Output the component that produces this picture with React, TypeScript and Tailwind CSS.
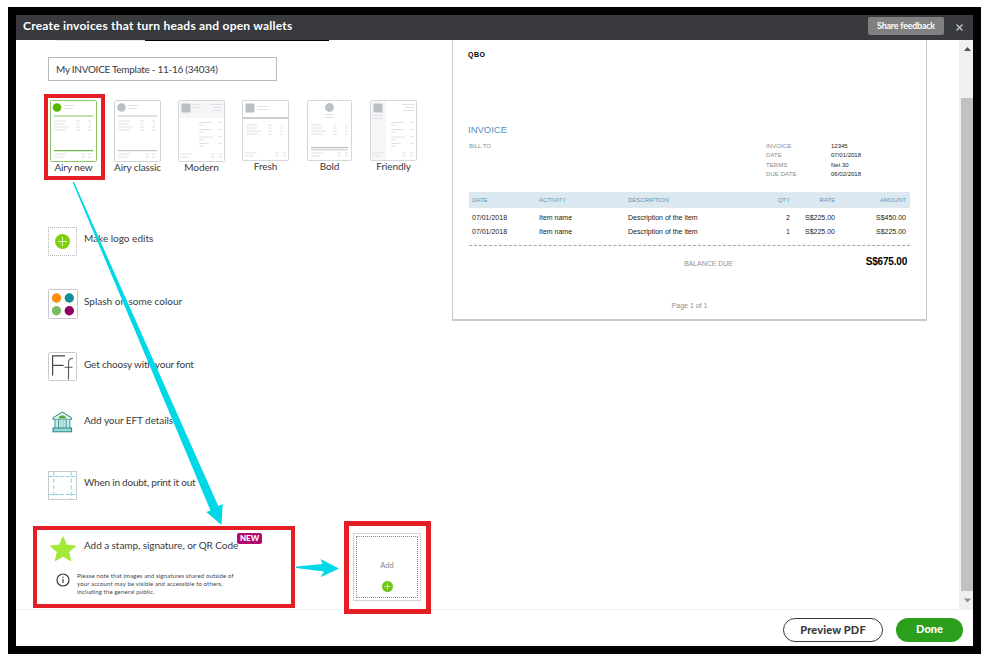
import React from 'react';

const PlusCircle: React.FC<{ className: string; color: string }> = ({ className, color }) => (
  <svg viewBox="0 0 16 16" className={className}>
    <circle cx="8" cy="8" r="8" fill={color} />
    <path d="M8 3.2v9.6M3.2 8h9.6" stroke="#e4f8c4" strokeWidth="1" fill="none" />
  </svg>
);

type Line = [x: number, y: number, w: number];

const tableLines: Line[] = [
  [4, 20.5, 12], [4, 23.5, 11], [4, 26.5, 15], [4, 29.5, 12],
  [26, 20.5, 4], [26, 23.5, 3], [26, 26.5, 4], [26, 29.5, 4],
  [38, 20.5, 3], [39, 23.5, 2], [38, 26.5, 3], [38, 29.5, 3],
];

const footerLines: Line[] = [
  [4, 53.5, 12], [4, 56.5, 9], [31, 53.5, 4], [31, 56.5, 4], [38, 53.5, 3], [38, 56.5, 3],
];

const sideLines: Line[] = [
  [21, 22, 13], [21, 24.5, 4], [41, 22, 3], [21, 29, 13], [21, 31.5, 5], [40, 29, 4],
  [21, 36.5, 14], [21, 39, 5], [40, 36.5, 4], [21, 43, 10], [21, 45.5, 4], [41, 43, 3],
];

const Lines: React.FC<{ lines: Line[]; color?: string }> = ({ lines, color = '#dfe1e4' }) => (
  <>
    {lines.map(([x, y, w]) => (
      <rect key={`${x}-${y}`} x={x} y={y} width={w} height="1" fill={color} />
    ))}
  </>
);

interface Template {
  name: string;
  art: React.ReactNode;
  width: number;
  height: number;
  border: string;
}

const templates: Template[] = [
  {
    name: 'Airy new',
    width: 47,
    height: 62,
    border: '#8cc665',
    art: (
      <>
        <circle cx="7" cy="7.5" r="4.3" fill="#53b700" />
        <Lines lines={[[14, 5, 10], [14, 8, 9]]} />
        <rect x="4" y="15.3" width="39" height="1.4" fill="#a5d68b" />
        <Lines lines={tableLines} />
        <rect x="4" y="50" width="39" height="1.2" fill="#6bb344" />
        <Lines lines={footerLines} />
      </>
    ),
  },
  {
    name: 'Airy classic',
    width: 47,
    height: 62,
    border: '#cfd1d5',
    art: (
      <>
        <circle cx="7.5" cy="7.5" r="4.3" fill="#babec5" />
        <Lines lines={[[14, 5, 10], [14, 8, 9]]} />
        <rect x="4" y="15.3" width="39" height="1.4" fill="#cfd1d4" />
        <Lines lines={tableLines} />
        <rect x="4" y="50" width="39" height="1.2" fill="#c2c4c8" />
        <Lines lines={footerLines} />
      </>
    ),
  },
  {
    name: 'Modern',
    width: 47,
    height: 62,
    border: '#d4d7dc',
    art: (
      <>
        <rect x="1" y="1" width="45" height="17" fill="#f6f6f8" />
        <rect x="3.5" y="3.5" width="9" height="9" fill="#babec5" />
        <Lines lines={[[14, 4, 9], [14, 7, 8], [31, 4, 13], [36, 7, 8], [34, 10, 10]]} color="#e0e2e6" />
        <Lines lines={sideLines} />
        <Lines lines={[[2, 53.5, 12], [2, 56.5, 9], [33, 53.5, 4], [33, 56.5, 4], [41, 53.5, 3], [41, 56.5, 3]]} />
      </>
    ),
  },
  {
    name: 'Fresh',
    width: 47,
    height: 61,
    border: '#d4d7dc',
    art: (
      <>
        <rect x="3.5" y="3.5" width="9" height="9" fill="#babec5" />
        <Lines lines={[[15, 6, 12], [15, 9, 11]]} />
        <rect x="1" y="17.2" width="45" height="1.5" fill="#babec5" />
        <g transform="translate(0 4)">
          <Lines lines={tableLines} />
        </g>
        <Lines lines={[[3, 52.5, 12], [3, 55.5, 9], [33, 52.5, 4], [33, 55.5, 4], [41, 52.5, 3], [41, 55.5, 3]]} />
      </>
    ),
  },
  {
    name: 'Bold',
    width: 45,
    height: 61,
    border: '#d4d7dc',
    art: (
      <>
        <circle cx="22.5" cy="7.5" r="4.4" fill="#babec5" />
        <Lines lines={[[18, 14, 9], [18, 17, 9]]} />
        <g transform="translate(0 4)">
          <Lines lines={tableLines} />
        </g>
        <rect x="4" y="47" width="37" height="1.2" fill="#babec5" />
        <rect x="4" y="49.4" width="37" height="1" fill="#c2c5ca" />
        <Lines lines={[[4, 52.5, 12], [4, 55.5, 9], [30, 52.5, 4], [30, 55.5, 4], [38, 52.5, 3], [38, 55.5, 3]]} />
      </>
    ),
  },
  {
    name: 'Friendly',
    width: 47,
    height: 61,
    border: '#d4d7dc',
    art: (
      <>
        <rect x="1" y="1" width="15" height="59" fill="#f6f6f8" />
        <rect x="3.5" y="3.5" width="9" height="9" fill="#babec5" />
        <Lines lines={[[32, 4, 12], [35, 7, 9], [33, 10, 11], [2, 15, 11], [2, 18, 11]]} />
        <Lines lines={sideLines} />
        <Lines lines={[[2, 52.5, 12], [2, 55.5, 9], [32, 52.5, 4], [32, 55.5, 4], [40, 52.5, 3], [40, 55.5, 3]]} />
      </>
    ),
  },
];

const TemplateCard: React.FC<{ template: Template }> = ({ template }) => {
  const { name, art, width, height, border } = template;
  return (
    <div className="flex w-16 flex-col items-center text-[10px] leading-[14px] text-[#393a3d]">
      <svg width={width} height={height} viewBox={`0 0 ${width} ${height}`}>
        <rect x="0.5" y="0.5" width={width - 1} height={height - 1} rx="1" fill="#fff" stroke={border} />
        {art}
      </svg>
      <span className="-mt-[2px] tracking-[-0.1px] whitespace-nowrap">{name}</span>
    </div>
  );
};

const ColourIcon = () => (
  <svg width="30" height="30" viewBox="0 0 30 30">
    <rect x="0.5" y="0.5" width="29" height="29" rx="1" fill="#fff" stroke="#c8cacd" />
    <circle cx="8.5" cy="9" r="4.7" fill="#ff8d08" />
    <circle cx="21.3" cy="9" r="4.7" fill="#158d97" />
    <circle cx="8.5" cy="21.7" r="4.7" fill="#78bd60" />
    <circle cx="21.3" cy="21.7" r="4.7" fill="#900061" />
  </svg>
);

const FontIcon = () => (
  <svg width="29" height="29" viewBox="0 0 29 29" fill="none">
    <rect x="0.5" y="0.5" width="28" height="28" rx="1" fill="#fff" stroke="#c8cacd" />
    <path d="M4.6 23.5V3.8H17M4.6 13.3h11" stroke="#44474b" strokeWidth="1.2" />
    <path d="M20.5 27.5V10.8q0-4.6 4.5-4.2M16.5 15.2h8" stroke="#55585c" strokeWidth="1.1" />
  </svg>
);

const BankIcon = () => (
  <svg width="22" height="22" viewBox="0 0 22 22" className="ml-[4px]">
    <path d="M1 6.8L10.3 1l9.3 5.8v1.6H1z" fill="#d8f2ec" stroke="#2f8184" strokeWidth="1" />
    <path d="M6.5 7.4q.4-3 3.8-3t3.8 3z" fill="#59a832" />
    <rect x="2.5" y="8.5" width="15.8" height="8.5" fill="#c4ece8" />
    <path d="M3 8.5v8.5M6.6 8.5v8.5M14.200 8.500v8.500M17.800 8.500v8.500" stroke="#4b989a" strokeWidth="1" />
    <path d="M9 8.500v8.500M11.700 8.500v8.500" stroke="#8cc9c8" strokeWidth="1" />
    <rect x="1" y="17" width="18.600" height="3.800" fill="#93d9d4" stroke="#2f8184" strokeWidth="1" />
  </svg>
);

const PrintIcon = () => (
  <svg width="29" height="29" viewBox="0 0 29 29" fill="none">
    <rect x="0.5" y="0.5" width="28" height="28" fill="#fff" stroke="#c5ccd0" />
    <path d="M1 5.5h27M1 23.5h27" stroke="#82d0e6" strokeDasharray="4 1.6" />
    <path d="M5.800 1v27M23.200 1v27" stroke="#82d0e6" strokeDasharray="4 2.600" />
  </svg>
);

const options = [
  {
    label: 'Make logo edits',
    row: 'h-[62px]',
    text: 'mt-[3px]',
    icon: (
      <div className="flex h-[29px] w-[29px] items-center justify-center border border-dotted border-[#b4b6bb]">
        <PlusCircle className="h-[15px] w-[15px]" color="#7ed00b" />
      </div>
    ),
  },
  { label: 'Splash on some colour', row: 'h-[63px]', text: 'mt-[4px]', icon: <ColourIcon /> },
  { label: 'Get choosy with your font', row: 'h-[59px]', text: 'mt-[4px] tracking-[-0.17px]', icon: <FontIcon /> },
  { label: 'Add your EFT details', row: 'h-[60px]', text: 'mt-px tracking-[-0.07px]', icon: <BankIcon /> },
  { label: 'When in doubt, print it out', row: 'h-[62px]', text: 'mt-[3px] tracking-[-0.22px]', icon: <PrintIcon /> },
];

const invoiceInfo = [
  ['INVOICE', '12345'],
  ['DATE', '07/01/2018'],
  ['TERMS', 'Net 30'],
  ['DUE DATE', '06/02/2018'],
];

const items = [
  { date: '07/01/2018', activity: 'Item name', description: 'Description of the item', qty: 2, rate: 'S$225.00', amount: 'S$450.00' },
  { date: '07/01/2018', activity: 'Item name', description: 'Description of the item', qty: 1, rate: 'S$225.00', amount: 'S$225.00' },
];

const Header = () => (
  <header className="flex h-[25px] shrink-0 items-center bg-[#393a3d] pl-[7px] text-white">
    <h1 className="-mt-[3px] text-[12px] font-bold tracking-[0.23px]">Create invoices that turn heads and open wallets</h1>
    <button className="mb-[3px] ml-auto h-[18px] w-[76px] rounded-[2px] bg-[#808080] text-[9px] leading-[18px] font-bold tracking-[-0.25px] whitespace-nowrap">
      Share feedback
    </button>
    <svg width="7" height="7" viewBox="0 0 7 7" className="mr-[10px] mb-px ml-[12px]">
      <path d="M0.5 0.5l6 6M6.5 0.5l-6 6" stroke="#c4cad4" strokeWidth="1.2" />
    </svg>
  </header>
);

const StampSection = () => (
  <div className="flex">
    <div className="w-[305px]">
      <div className="flex">
        <svg width="27" height="26" viewBox="0 0 27 26" className="mt-[3px] ml-[2px]">
          <path
            d="M13 1l3.4 8.2 8.9.8-6.7 5.9 2 8.7L13 20l-7.6 4.6 2-8.7L.7 10l8.9-.8z"
            fill="#a4e83a"
            stroke="#a4e83a"
            strokeWidth="1.2"
            strokeLinejoin="round"
          />
        </svg>
        <span className="mt-[4px] ml-[7px] w-[153px] text-[10px] leading-4 tracking-[-0.06px] whitespace-nowrap">
          Add a stamp, signature, or QR Code
        </span>
        <span className="h-[11px] w-[25px] rounded-[2px] bg-[#ad0b70] text-center text-[8px] leading-[11px] font-black text-white">NEW</span>
      </div>
      <div className="mt-[10px] flex">
        <svg width="14" height="14" viewBox="0 0 14 14" className="mt-px ml-2" fill="none">
          <circle cx="7" cy="7" r="6" stroke="#393a3d" strokeWidth="1.2" />
          <path d="M7 6v4M7 3.700v1.200" stroke="#393a3d" strokeWidth="1.200" />
        </svg>
        <p className="ml-[7px] text-[6px] leading-[8px] tracking-[0.14px] whitespace-nowrap text-[#44454a]">
          Please note that images and signatures shared outside of
          <br />
          your account may be visible and accessible to others,
          <br />
          including the general public.
        </p>
      </div>
    </div>
    <div className="h-[68px] w-[68px] border border-[#d4d4d4] p-[2px]">
      <div className="flex h-full flex-col items-center border border-dotted border-[#8d8d92] pt-[22px] text-[7.5px] leading-[14px] text-[#85868a]">
        Add
        <PlusCircle className="mt-[8px] h-[11px] w-[11px] shrink-0" color="#71c41a" />
      </div>
    </div>
  </div>
);

const DesignPanel = () => (
  <section className="w-[436px] shrink-0 pl-8 text-[#393a3d]">
    <div className="ml-2 flex h-px">
      <div className="w-[89px] bg-[#e6e8ea]" />
      <div className="w-[184px] bg-black" />
    </div>
    <div className="mt-4 h-6 w-[229px] border border-[#b5b8bc] pl-[7px] text-[10px] leading-[22px] tracking-[-0.29px]">
      My INVOICE Template - 11-16 (34034)
    </div>
    <div className="mt-[19px] -ml-[6.5px] flex h-[127px]">
      {templates.map((template) => (
        <TemplateCard key={template.name} template={template} />
      ))}
    </div>
    {options.map(({ label, row, text, icon }) => (
      <div key={label} className={`flex items-start ${row}`}>
        <div className="w-9">{icon}</div>
        <span className={`text-[10px] leading-4 whitespace-nowrap ${text}`}>{label}</span>
      </div>
    ))}
    <StampSection />
  </section>
);

const columns = 'grid grid-cols-[67px_89px_119px_43px_45px_71px] pr-[3px] pl-[3px]';

const InvoicePreview = () => (
  <section className="flex h-[281px] w-[475px] shrink-0 flex-col border-x border-b-2 border-[#c9cacc] pr-4 pl-4 font-['Liberation_Sans',Arial,sans-serif] text-[7px] text-[#222]">
    <div className="mt-[10px] -ml-px text-[7px] leading-[9px] font-bold tracking-[0.5px] text-black">QBO</div>
    <div className="mt-[65px] -ml-px text-[9.5px] leading-3 text-[#5590b8]">INVOICE</div>
    <div className="mt-[6px] flex">
      <div className="w-[297px] text-[6px] leading-[9px] text-[#8e8f91]">BILL TO</div>
      <div className="flex flex-col text-[6px] leading-[9.3px]">
        {invoiceInfo.map(([label, value]) => (
          <div key={label} className="flex">
            <span className="w-[65px] tracking-[0.08px] text-[#88898b]">{label}</span>
            <span>{value}</span>
          </div>
        ))}
      </div>
    </div>
    <div className={`mt-[13px] h-4 bg-[#dce8f0] text-[6px] leading-4 text-[#5c97be] ${columns}`}>
      <span>DATE</span>
      <span>ACTIVITY</span>
      <span>DESCRIPTION</span>
      <span className="text-right">QTY</span>
      <span className="text-right">RATE</span>
      <span className="text-right">AMOUNT</span>
    </div>
    <div className="mt-[3px] leading-[14px]">
      {items.map((item) => (
        <div key={item.amount} className={columns}>
          <span>{item.date}</span>
          <span>{item.activity}</span>
          <span>{item.description}</span>
          <span className="text-right">{item.qty}</span>
          <span className="text-right">{item.rate}</span>
          <span className="text-right">{item.amount}</span>
        </div>
      ))}
    </div>
    <div className="mt-[6px] border-t border-dashed border-[#a5a6a8]" />
    <div className="mt-[8px] flex justify-between pr-[3px] pl-[215px] leading-4">
      <span className="pt-[2px] tracking-[-0.05px] text-[#8f9092]">BALANCE DUE</span>
      <span className="text-[10px] font-bold tracking-[-0.2px] text-black">S$675.00</span>
    </div>
    <div className="mt-[26px] text-center leading-4 text-[#8f9092]">Page 1 of 1</div>
  </section>
);

const Scrollbar = () => (
  <div className="ml-auto flex w-[14px] flex-col bg-[#f0f0f0]">
    <svg width="14" height="58" viewBox="0 0 14 58">
      <path d="M5 11l3.5-4 3.5 4z" fill="#505050" />
    </svg>
    <div className="ml-[2px] flex-1 bg-[#c1c1c1]" />
    <svg width="14" height="18" viewBox="0 0 14 18">
      <path d="M5 7.500h7l-3.500 4z" fill="#8d8d8d" />
    </svg>
  </div>
);

const Footer = () => (
  <footer className="flex h-[37px] shrink-0 items-start justify-end gap-[13px] border-t border-[#eceef1] pt-[8px] pr-[10px] text-[11px] font-black">
    <button className="h-6 w-[100px] rounded-full border border-[#393a3d] tracking-[0.15px] text-[#393a3d]">Preview PDF</button>
    <button className="h-6 w-[67px] rounded-full bg-[#2ca01c] pb-px text-white">Done</button>
  </footer>
);

// Callout boxes and arrows drawn over the page
const Annotations = () => (
  <svg width="988" height="662" viewBox="0 0 988 662" className="pointer-events-none absolute top-0 left-0" fill="none">
    <path d="M72.500 182L74 182L218.300 506L222.700 504L221.500 525L206.300 512L210.500 510.500z" fill="#00d8e8" />
    <path d="M296 566.500L322.500 564L320.500 559L339 568.500L320.500 577.300L324 571.500L296 568z" fill="#00d8e8" />
    <g stroke="#e31e24">
      <rect x="46" y="96" width="57" height="82" strokeWidth="4" />
      <rect x="35" y="528" width="258" height="78" strokeWidth="4" />
      <rect x="346.500" y="523.500" width="82" height="88" strokeWidth="5" />
    </g>
  </svg>
);

export default function App() {
  return (
    <div className="relative h-[662px] w-[988px] overflow-hidden bg-white pt-[7px] pl-2 font-[Lato,sans-serif]">
      <div className="flex h-[647px] w-[973px] flex-col border-8 border-black bg-white">
        <Header />
        <main className="flex min-h-0 flex-1">
          <DesignPanel />
          <InvoicePreview />
          <Scrollbar />
        </main>
        <Footer />
      </div>
      <Annotations />
    </div>
  );
}
